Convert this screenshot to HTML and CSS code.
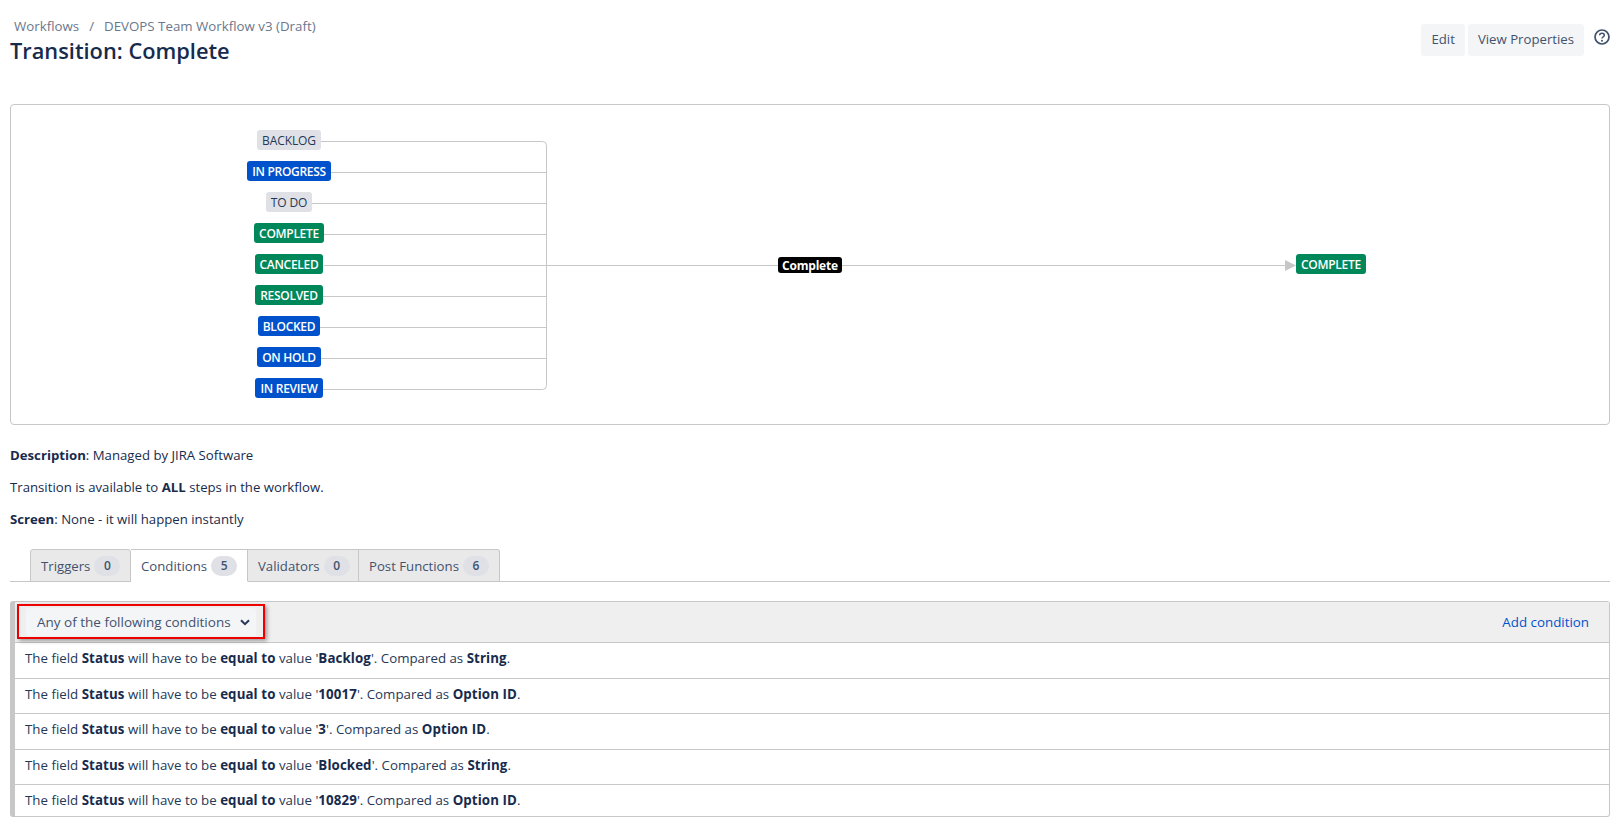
FILE: index.html
```html
<!DOCTYPE html>
<html lang="en">
<head>
<meta charset="utf-8">
<title>Transition: Complete</title>
<link rel="stylesheet" href="styles.css">
</head>
<body>
<div class="page">
  <header class="head">
    <div class="head-text">
      <nav class="crumbs"><a>Workflows</a><span class="sep">/</span><a>DEVOPS Team Workflow v3 (Draft)</a></nav>
      <h1 class="title">Transition: Complete</h1>
    </div>
    <div class="actions">
      <button class="btn btn-edit">Edit</button>
      <button class="btn">View Properties</button>
      <svg class="help" viewBox="0 0 16 16" width="16" height="16"><circle cx="8" cy="8" r="7" fill="none" stroke="#42526e" stroke-width="1.7"/><path d="M5.7 6.3c0-1.3 1-2.1 2.3-2.1s2.3.8 2.3 2c0 1.9-2.3 1.7-2.3 3.4" fill="none" stroke="#42526e" stroke-width="1.5"/><circle cx="8" cy="11.7" r="1" fill="#42526e"/></svg>
    </div>
  </header>

  <section class="diagram">
    <svg class="wires" width="1598" height="318" viewBox="0 0 1598 318">
      <path d="M299 36.5H531.5a4 4 0 0 1 4 4V280.5a4 4 0 0 1-4 4H302" fill="none" stroke="#c7c7c7"/>
      <path d="M320 67.5H535.5M301 98.5H535.5M313 129.5H535.5M313 160.5H1276M311 191.5H535.5M309 222.5H535.5M310 253.5H535.5" fill="none" stroke="#c7c7c7"/>
      <polygon points="1274,155 1285,160.5 1274,166" fill="#c7c7c7"/>
    </svg>
    <div class="sources">
      <span class="status grey">BACKLOG</span>
      <span class="status blue">IN PROGRESS</span>
      <span class="status grey">TO DO</span>
      <span class="status green">COMPLETE</span>
      <span class="status green">CANCELED</span>
      <span class="status green">RESOLVED</span>
      <span class="status blue">BLOCKED</span>
      <span class="status blue">ON HOLD</span>
      <span class="status blue">IN REVIEW</span>
    </div>
    <span class="edge-label">Complete</span>
    <span class="status green target">COMPLETE</span>
  </section>

  <section class="info">
    <p><b>Description</b>: Managed by JIRA Software</p>
    <p>Transition is available to <b>ALL</b> steps in the workflow.</p>
    <p><b>Screen</b>: None - it will happen instantly</p>
  </section>

  <ul class="tabs">
    <li class="tab tab-a">Triggers <span class="count">0</span></li>
    <li class="tab tab-b active">Conditions <span class="count">5</span></li>
    <li class="tab tab-c">Validators <span class="count">0</span></li>
    <li class="tab tab-d">Post Functions <span class="count">6</span></li>
  </ul>

  <section class="panel">
    <div class="panel-head">
      <div class="highlight">
        <div class="select">Any of the following conditions
          <svg class="chev" viewBox="0 0 10 7" width="10" height="7"><path d="M1 1.2l4 4 4-4" fill="none" stroke="#253858" stroke-width="2"/></svg>
        </div>
      </div>
      <a class="add">Add condition</a>
    </div>
    <div class="row">The field <b>Status</b> will have to be <b>equal to</b> value '<b>Backlog</b>'. Compared as <b>String</b>.</div>
    <div class="row">The field <b>Status</b> will have to be <b>equal to</b> value '<b>10017</b>'. Compared as <b>Option ID</b>.</div>
    <div class="row">The field <b>Status</b> will have to be <b>equal to</b> value '<b>3</b>'. Compared as <b>Option ID</b>.</div>
    <div class="row">The field <b>Status</b> will have to be <b>equal to</b> value '<b>Blocked</b>'. Compared as <b>String</b>.</div>
    <div class="row last">The field <b>Status</b> will have to be <b>equal to</b> value '<b>10829</b>'. Compared as <b>Option ID</b>.</div>
  </section>
</div>
</body>
</html>
```

FILE: styles.css
```css
* { box-sizing: border-box; }
html, body { margin: 0; padding: 0; height: 819px; overflow: hidden; background: #fff; }
body { font-family: "Open Sans", "Noto Sans", sans-serif; font-size: 13.2px; color: #172b4d; }
.page { padding: 0 5px 0 10px; }
b { font-weight: 700; }

.head { height: 104px; display: flex; justify-content: space-between; align-items: flex-start; }
.head-text { padding-top: 17px; }
.crumbs { padding-left: 4px; height: 18px; line-height: 18px; color: #6b778c; font-size: 13.3px; }
.sep { margin: 0 10px; }
.title { margin: 2px 0 0; font-size: 21.8px; line-height: 28px; font-weight: 600; color: #172b4d; }
.actions { display: flex; align-items: flex-start; padding-top: 24px; }
.btn { height: 32px; margin: 0 0 0 2px; padding: 0 10px 2px; border: 0; border-radius: 3px; background: #f4f5f7; color: #42526e; font: inherit; }
.btn-edit { margin-right: 1px; }
.help { margin: 5px 0 0 10px; }

.diagram { position: relative; height: 321px; border: 1px solid #c7c7c7; border-radius: 4px; }
.wires { position: absolute; left: 0; top: 0; }
.sources { position: absolute; left: 178px; top: 25px; width: 200px; display: flex; flex-direction: column; align-items: center; gap: 11px; }
.status { display: block; height: 20px; line-height: 21px; padding: 0 5px; border-radius: 3px; font-size: 12px; letter-spacing: -.3px; font-weight: 600; white-space: nowrap; }
.grey { background: #dfe1e6; color: #253858; font-weight: 400; letter-spacing: -.1px; }
.blue { background: #0052cc; color: #fff; }
.green { background: #00875a; color: #fff; }
.target { position: absolute; left: 1285px; top: 149px; }
.edge-label { position: absolute; left: 767px; top: 152px; height: 16px; line-height: 17px; padding: 0 4px; border-radius: 3px; background: #000; color: #fff; font-size: 12px; letter-spacing: -.2px; font-weight: 700; }

.info { padding-top: 21px; }
.info p { margin: 0 0 14px; line-height: 18px; }

.tabs { list-style: none; margin: 21px 0 0; padding: 0 0 0 20px; height: 33px; display: flex; border-bottom: 1px solid #c7c7c7; }
.tab { height: 33px; display: flex; align-items: center; gap: 4px; padding-left: 10px; background: #e9e9e9; border: 1px solid #c7c7c7; border-radius: 3px 3px 0 0; color: #42526e; }
.tab + .tab { border-left: 0; border-radius: 0; }
.tab-d { border-radius: 0 3px 0 0 !important; }
.tab-a { width: 101px; }
.tab-b { width: 117px; }
.tab-c { width: 111px; }
.tab-d { width: 141px; }
.active { background: #fff; border-bottom-color: #fff; }
.count { width: 26px; height: 20px; line-height: 20px; text-align: center; border-radius: 10px; background: #dfe1e6; font-size: 12px; font-weight: 600; }

.panel { margin-top: 19px; border: 1px solid #c7c7c7; border-left: 5px solid #c7c7c7; border-radius: 3px; }
.panel-head { height: 40px; background: #efefef; display: flex; justify-content: space-between; align-items: flex-start; padding: 2px 20px 0 2px; }
.highlight { width: 248px; height: 35px; border: 2px solid #ee0000; box-shadow: 2px 2px 4px rgba(0,0,0,.35); padding: 2px 7px; }
.select { height: 28px; padding: 0 6px 0 11px; display: flex; align-items: center; justify-content: space-between; background: #f4f5f7; border-radius: 3px; color: #42526e; font-size: 13.5px; }
.add { margin-top: 9px; color: #0052cc; font-size: 13.35px; }
.row { height: 35.5px; padding-top: 5px; line-height: 20px; border-top: 1px solid #c7c7c7; padding-left: 10px; color: #253858; font-size: 13.3px; }
.row b { color: #172b4d; letter-spacing: .1px; }
.row.last { height: 32px; }
```
